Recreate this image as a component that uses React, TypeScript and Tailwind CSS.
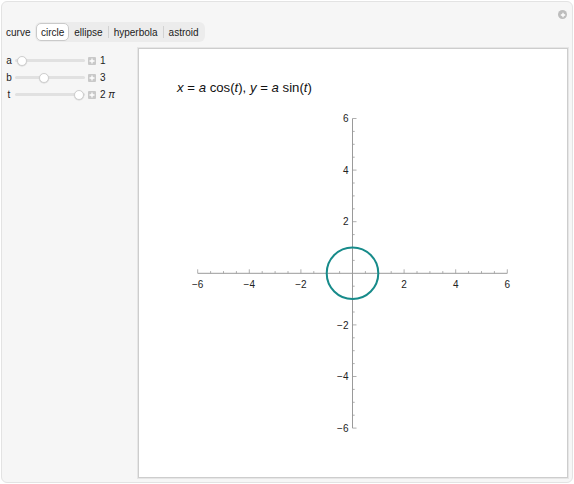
import React from "react";

const FONT = '"Liberation Sans", Arial, sans-serif';

const ox = 352.5;
const oy = 273.3;
const s = 25.8;

function PlusBox() {
  return (
    <div className="flex h-[8px] w-[8px] items-center justify-center rounded-[1px] bg-[#c9c9c9]">
      <svg width="6" height="6" viewBox="0 0 6 6">
        <path d="M3 0.5V5.5M0.5 3H5.5" stroke="#fff" strokeWidth="1.3" />
      </svg>
    </div>
  );
}

function SliderRow({ label, knob, value }: { label: string; knob: number; value: React.ReactNode }) {
  return (
    <div className="flex h-[17px] items-center">
      <div className="ml-[3px] w-[8px] text-center text-[10px] text-[#222]">{label}</div>
      <div className="relative ml-[2px] flex h-[12px] w-[70px] items-center">
        <div className="h-[3px] w-full rounded-full bg-[#e1e1e1]" />
        <div
          className="absolute top-[1px] h-[10px] w-[10px] rounded-full border border-[#cfcfcf] bg-white shadow-[0_0.5px_1px_rgba(0,0,0,0.15)]"
          style={{ left: knob - 15 - 5 }}
        />
      </div>
      <div className="ml-[3px]">
        <PlusBox />
      </div>
      <div className="ml-[4px] text-[10px] text-[#222]">{value}</div>
    </div>
  );
}

function Plot() {
  const ticks: React.ReactNode[] = [];
  for (let i = -12; i <= 12; i++) {
    if (i === 0) continue;
    const major = i % 4 === 0;
    const len = major ? 4 : 2.2;
    const x = ox + i * 0.5 * s;
    const y = oy - i * 0.5 * s;
    ticks.push(<line key={"x" + i} x1={x} x2={x} y1={oy} y2={oy - len} stroke="#9a9a9a" strokeWidth="0.8" />);
    ticks.push(<line key={"y" + i} x1={ox} x2={ox + len} y1={y} y2={y} stroke="#9a9a9a" strokeWidth="0.8" />);
  }
  const labels = [-6, -4, -2, 2, 4, 6];
  return (
    <svg width="428" height="428" viewBox="139 49 428 428" style={{ fontFamily: FONT }}>
      <text x="177" y="91.5" fontSize="13.2" fill="#111">
        <tspan fontStyle="italic">x</tspan>
        <tspan> = </tspan>
        <tspan fontStyle="italic">a</tspan>
        <tspan> cos(</tspan>
        <tspan fontStyle="italic">t</tspan>
        <tspan>), </tspan>
        <tspan fontStyle="italic">y</tspan>
        <tspan> = </tspan>
        <tspan fontStyle="italic">a</tspan>
        <tspan> sin(</tspan>
        <tspan fontStyle="italic">t</tspan>
        <tspan>)</tspan>
      </text>
      <line x1={ox - 6 * s} x2={ox + 6 * s} y1={oy} y2={oy} stroke="#9a9a9a" strokeWidth="1" />
      <line x1={ox} x2={ox} y1={oy - 6 * s} y2={oy + 6 * s} stroke="#9a9a9a" strokeWidth="1" />
      {ticks}
      {labels.map((v) => (
        <text key={"lx" + v} x={ox + v * s} y={oy + 15} fontSize="10" fill="#222" textAnchor="middle">
          {v < 0 ? "\u2212" + -v : String(v)}
        </text>
      ))}
      {labels.map((v) => (
        <text key={"ly" + v} x={ox - 4} y={oy - v * s + 3.6} fontSize="10" fill="#222" textAnchor="end">
          {v < 0 ? "\u2212" + -v : String(v)}
        </text>
      ))}
      <circle cx={ox} cy={oy} r={s} fill="none" stroke="#178b8a" strokeWidth="2" />
    </svg>
  );
}

export default function App() {
  const tabs = ["circle", "ellipse", "hyperbola", "astroid"];
  return (
    <div className="h-[484px] w-[574px] bg-white pl-[1px] pt-[1px]" style={{ fontFamily: FONT }}>
      <div className="h-[482px] w-[572px] rounded-[6px] border border-[#e3e3e3] bg-[#f6f6f6]">
        <div className="flex h-[20px] items-start justify-end pr-[5px] pt-[8px]">
          <div className="flex h-[9px] w-[9px] items-center justify-center rounded-full bg-[#bdbdbd]">
            <svg width="6" height="6" viewBox="0 0 6 6">
              <path d="M3 0.8V5.2M0.8 3H5.2" stroke="#fff" strokeWidth="1.3" />
            </svg>
          </div>
        </div>
        <div className="flex h-[20px] items-center pl-[4px]">
          <span className="text-[10px] text-[#222]">curve</span>
          <div className="ml-[4.5px] flex h-[20px] items-center rounded-[6px] bg-[#ececec] p-[1px]">
            {tabs.map((t, i) => {
              const selected = i === 0;
              const sep = i > 1;
              return (
                <div key={t} className="flex h-full items-center">
                  {sep && <div className="h-[12px] w-[1px] bg-[#d2d2d2]" />}
                  <div
                    className={
                      selected
                        ? "flex h-[18px] items-center rounded-[5px] border border-[#cacaca] bg-white px-[4px] text-[10px] text-[#222]"
                        : "flex h-[18px] items-center px-[5px] text-[10px] text-[#222]"
                    }
                  >
                    {t}
                  </div>
                </div>
              );
            })}
          </div>
        </div>
        <div className="mt-[6px] flex">
          <div className="w-[136px] pt-[4px]">
            <SliderRow label="a" knob={21.5} value="1" />
            <SliderRow label="b" knob={44} value="3" />
            <SliderRow
              label="t"
              knob={78.5}
              value={
                <span>
                  2 <span className="italic">π</span>
                </span>
              }
            />
          </div>
          <div className="h-[430px] w-[430px] border border-[#cdcdcd] bg-white shadow-[0_0_0_1px_#e6e6e6]">
            <Plot />
          </div>
        </div>
      </div>
    </div>
  );
}
